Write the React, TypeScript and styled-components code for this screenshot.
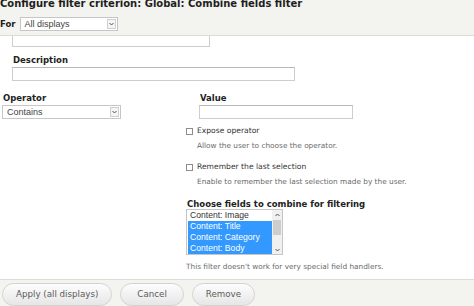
import React from "react";
import styled, { createGlobalStyle } from "styled-components";

const GlobalStyle = createGlobalStyle`
  html, body {
    margin: 0;
    padding: 0;
    background: #fff;
  }
  body {
    font-family: "DejaVu Sans", Verdana, sans-serif;
    color: #333;
  }
`;

const Chevron: React.FC<{ up?: boolean }> = ({ up }) => (
  <svg width="5" height="4" viewBox="0 0 5 4">
    <polyline
      points={up ? "0.5,3 2.5,1 4.5,3" : "0.5,1 2.5,3 4.5,1"}
      fill="none"
      stroke="#555"
      strokeWidth="1"
    />
  </svg>
);

const Select: React.FC<{ value: string; width: number }> = ({ value, width }) => (
  <SelectBox $width={width}>
    <SelectValue>{value}</SelectValue>
    <SelectArrow>
      <Chevron />
    </SelectArrow>
  </SelectBox>
);

const Checkbox: React.FC<{ label: string; description: string; first?: boolean }> = ({ label, description, first }) => (
  <CheckItem $first={first}>
    <CheckRow>
      <Box type="checkbox" />
      <CheckLabel>{label}</CheckLabel>
    </CheckRow>
    <Description $indent>{description}</Description>
  </CheckItem>
);

const fields = [
  { name: "Content: Image", selected: false },
  { name: "Content: Title", selected: true },
  { name: "Content: Category", selected: true },
  { name: "Content: Body", selected: true },
];

const App: React.FC = () => {
  return (
    <Page>
      <GlobalStyle />
      <Header>
        <Title>Configure filter criterion: Global: Combine fields filter</Title>
        <ForRow>
          <ForLabel>For</ForLabel>
          <Select value="All displays" width={98} />
        </ForRow>
      </Header>

      <Content>
        <Scrolled>
          <Indented>
            <TextInput $width={198} />
            <Label $top={8}>Description</Label>
            <TextInput $width={283} />
          </Indented>

          <Columns>
            <LeftColumn>
              <Label>Operator</Label>
              <Select value="Contains" width={119} />
            </LeftColumn>
            <RightColumn>
              <ValueGroup>
                <Label>Value</Label>
                <TextInput $width={154} />
              </ValueGroup>
              <Checkbox first label="Expose operator" description="Allow the user to choose the operator." />
              <Checkbox label="Remember the last selection" description="Enable to remember the last selection made by the user." />
              <Label $top={12}>Choose fields to combine for filtering</Label>
              <ListBox>
                <Options>
                  {fields.map((f) => (
                    <Option key={f.name} $selected={f.selected}>
                      {f.name}
                    </Option>
                  ))}
                </Options>
                <Scrollbar>
                  <ScrollButton>
                    <Chevron up />
                  </ScrollButton>
                  <Track>
                    <Thumb />
                  </Track>
                  <ScrollButton>
                    <Chevron />
                  </ScrollButton>
                </Scrollbar>
              </ListBox>
              <Description $top={7}>This filter doesn't work for very special field handlers.</Description>
            </RightColumn>
          </Columns>
        </Scrolled>
      </Content>

      <Footer>
        <Button>Apply (all displays)</Button>
        <Button $wide>Cancel</Button>
        <Button>Remove</Button>
      </Footer>
    </Page>
  );
};

export default App;

const Page = styled.div`
  width: 474px;
  height: 306px;
  display: flex;
  flex-direction: column;
  overflow: hidden;
`;

const Header = styled.header`
  flex: none;
  display: flex;
  flex-direction: column;
  height: 36px;
  box-sizing: border-box;
  padding-bottom: 4px;
  background: #f3f3ef;
  border-bottom: 1px solid #dcdcd6;
  overflow: hidden;
`;

const Title = styled.h1`
  margin: -3px 0 0;
  font-size: 10px;
  line-height: 13px;
  font-weight: bold;
  color: #1f1f1f;
  white-space: nowrap;
`;

const ForRow = styled.div`
  display: flex;
  align-items: center;
  gap: 4px;
  margin-top: 7px;
`;

const ForLabel = styled.span`
  font-size: 8.5px;
  font-weight: bold;
  color: #222;
`;

const SelectBox = styled.div<{ $width: number }>`
  display: flex;
  align-items: center;
  box-sizing: border-box;
  width: ${(p) => p.$width}px;
  height: 14px;
  padding: 0 1px 0 4px;
  border: 1px solid #c6c6c6;
  background: #fff;
  font-family: "Liberation Sans", Arial, sans-serif;
  font-size: 9px;
  color: #444;
`;

const SelectValue = styled.span`
  flex: 1;
  white-space: nowrap;
`;

const SelectArrow = styled.span`
  display: flex;
  align-items: center;
  justify-content: center;
  box-sizing: border-box;
  width: 9px;
  height: 10px;
  border: 1px solid #cfcfcf;
  background: #f5f5f5;
`;

const Content = styled.main`
  flex: 1;
  overflow: hidden;
`;

const Scrolled = styled.div`
  margin-top: -3px;
`;

const Indented = styled.div`
  padding-left: 12px;
`;

const TextInput = styled.input.attrs({ type: "text" })<{ $width: number }>`
  display: block;
  box-sizing: border-box;
  width: ${(p) => p.$width}px;
  height: 14px;
  margin: 0;
  padding: 0 3px;
  border: 1px solid #cdcdcd;
  border-top-color: #b8b8b8;
  background: #fff;
`;

const Label = styled.label<{ $top?: number }>`
  display: block;
  margin-top: ${(p) => p.$top ?? 0}px;
  margin-bottom: 0;
  padding-left: 1px;
  font-size: 8.5px;
  line-height: 10px;
  font-weight: bold;
  color: #222;
  white-space: nowrap;
  & + ${SelectBox}, & + ${TextInput} {
    margin-top: 2px;
  }
`;

const Columns = styled.div`
  display: flex;
  margin-top: 12px;
`;

const LeftColumn = styled.div`
  width: 184px;
  padding-left: 2px;
`;

const RightColumn = styled.div`
  flex: 1;
`;

const ValueGroup = styled.div`
  padding-left: 13px;
`;

const CheckItem = styled.div<{ $first?: boolean }>`
  margin-top: ${(p) => (p.$first ? 7 : 11)}px;
`;

const CheckRow = styled.div`
  display: flex;
  align-items: center;
  gap: 4px;
  height: 10px;
`;

const Box = styled.input`
  appearance: none;
  box-sizing: border-box;
  width: 7px;
  height: 7px;
  margin: 0;
  border: 1px solid #8c8c8c;
  background: #fff;
`;

const CheckLabel = styled.span`
  font-size: 7.6px;
  line-height: 10px;
  color: #333;
  white-space: nowrap;
`;

const Description = styled.div<{ $indent?: boolean; $top?: number }>`
  margin-top: ${(p) => p.$top ?? 5}px;
  padding-left: ${(p) => (p.$indent ? 11 : 0)}px;
  font-size: 7.35px;
  line-height: 10px;
  color: #6a6a6a;
  white-space: nowrap;
`;

const ListBox = styled.div`
  display: flex;
  box-sizing: border-box;
  width: 97px;
  height: 46px;
  border: 1px solid #c6c6c6;
  background: #fff;
  overflow: hidden;
`;

const Options = styled.ul`
  flex: 1;
  margin: 0 0 0 1px;
  padding: 0;
  list-style: none;
`;

const Option = styled.li<{ $selected?: boolean }>`
  height: 11px;
  padding-left: 2px;
  font-family: "Liberation Sans", Arial, sans-serif;
  font-size: 8.6px;
  line-height: 11px;
  white-space: nowrap;
  background: ${(p) => (p.$selected ? "#3399ff" : "transparent")};
  color: ${(p) => (p.$selected ? "#fff" : "#333")};
`;

const Scrollbar = styled.div`
  display: flex;
  flex-direction: column;
  width: 10px;
  background: #f0f0f0;
`;

const ScrollButton = styled.div`
  display: flex;
  align-items: center;
  justify-content: center;
  height: 9px;
  background: #f0f0f0;
`;

const Track = styled.div`
  flex: 1;
  padding: 1px 1px 0;
`;

const Thumb = styled.div`
  height: 15px;
  background: #cdcdcd;
`;

const Footer = styled.footer`
  flex: none;
  display: flex;
  align-items: flex-start;
  gap: 8px;
  height: 27px;
  box-sizing: border-box;
  padding: 3px 0 0 2px;
  background: #f3f3ef;
  border-top: 1px solid #dcdcd6;
  overflow: hidden;
`;

const Button = styled.button<{ $wide?: boolean }>`
  flex: none;
  padding: 5px ${(p) => (p.$wide ? 16 : 13)}px;
  border: 1px solid #d3d3d3;
  border-radius: 20px;
  background: linear-gradient(#fdfdfd, #e6e6e6);
  font-family: "DejaVu Sans", Verdana, sans-serif;
  font-size: 8.7px;
  line-height: 11px;
  color: #5a5a5a;
  cursor: pointer;
`;
